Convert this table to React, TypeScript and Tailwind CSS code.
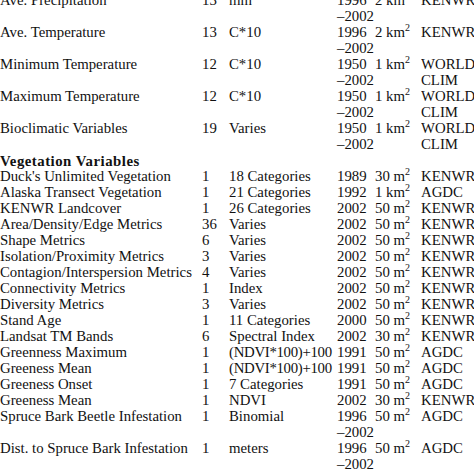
import React from 'react';

type Row = {
  name: string;
  n?: string;
  units?: string;
  years?: string[];
  res?: React.ReactNode;
  source?: string[];
  bold?: boolean;
};

const Sq = () => <span className="relative -top-[6px] text-[10px] leading-none">2</span>;

const km = (v: string) => (
  <>
    {v} km<Sq />
  </>
);
const m = (v: string) => (
  <>
    {v} m<Sq />
  </>
);

const rows: Row[] = [
  { name: 'Ave. Precipitation', n: '13', units: 'mm', years: ['1996', '–2002'], res: km('2'), source: ['KENWR'] },
  { name: 'Ave. Temperature', n: '13', units: 'C*10', years: ['1996', '–2002'], res: km('2'), source: ['KENWR'] },
  { name: 'Minimum Temperature', n: '12', units: 'C*10', years: ['1950', '–2002'], res: km('1'), source: ['WORLD-', 'CLIM'] },
  { name: 'Maximum Temperature', n: '12', units: 'C*10', years: ['1950', '–2002'], res: km('1'), source: ['WORLD-', 'CLIM'] },
  { name: 'Bioclimatic Variables', n: '19', units: 'Varies', years: ['1950', '–2002'], res: km('1'), source: ['WORLD-', 'CLIM'] },
  { name: 'Vegetation Variables', bold: true },
  { name: "Duck's Unlimited Vegetation", n: '1', units: '18 Categories', years: ['1989'], res: m('30'), source: ['KENWR'] },
  { name: 'Alaska Transect Vegetation', n: '1', units: '21 Categories', years: ['1992'], res: km('1'), source: ['AGDC'] },
  { name: 'KENWR Landcover', n: '1', units: '26 Categories', years: ['2002'], res: m('50'), source: ['KENWR'] },
  { name: 'Area/Density/Edge Metrics', n: '36', units: 'Varies', years: ['2002'], res: m('50'), source: ['KENWR'] },
  { name: 'Shape Metrics', n: '6', units: 'Varies', years: ['2002'], res: m('50'), source: ['KENWR'] },
  { name: 'Isolation/Proximity Metrics', n: '3', units: 'Varies', years: ['2002'], res: m('50'), source: ['KENWR'] },
  { name: 'Contagion/Interspersion Metrics', n: '4', units: 'Varies', years: ['2002'], res: m('50'), source: ['KENWR'] },
  { name: 'Connectivity Metrics', n: '1', units: 'Index', years: ['2002'], res: m('50'), source: ['KENWR'] },
  { name: 'Diversity Metrics', n: '3', units: 'Varies', years: ['2002'], res: m('50'), source: ['KENWR'] },
  { name: 'Stand Age', n: '1', units: '11 Categories', years: ['2000'], res: m('50'), source: ['KENWR'] },
  { name: 'Landsat TM Bands', n: '6', units: 'Spectral Index', years: ['2002'], res: m('30'), source: ['KENWR'] },
  { name: 'Greenness Maximum', n: '1', units: '(NDVI*100)+100', years: ['1991'], res: m('50'), source: ['AGDC'] },
  { name: 'Greeness Mean', n: '1', units: '(NDVI*100)+100', years: ['1991'], res: m('50'), source: ['AGDC'] },
  { name: 'Greeness Onset', n: '1', units: '7 Categories', years: ['1991'], res: m('50'), source: ['AGDC'] },
  { name: 'Greeness Mean', n: '1', units: 'NDVI', years: ['2002'], res: m('30'), source: ['KENWR'] },
  { name: 'Spruce Bark Beetle Infestation', n: '1', units: 'Binomial', years: ['1996', '–2002'], res: m('50'), source: ['AGDC'] },
  { name: 'Dist. to Spruce Bark Infestation', n: '1', units: 'meters', years: ['1996', '–2002'], res: m('50'), source: ['AGDC'] },
];

export default function App() {
  return (
    <div className="w-[474px] h-[474px] overflow-hidden bg-white">
      <div
        className="-mt-[8px] grid grid-cols-[202px_27px_109px_37px_46px_53px] text-[14.8px] leading-4 text-[#111] whitespace-nowrap"
        style={{ fontFamily: '"Liberation Serif", "Times New Roman", serif' }}
      >
        {rows.map((r, i) =>
          r.bold ? (
            <div key={i} className="col-span-6 h-4 font-bold pt-[1px] tracking-[0.5px]">
              {r.name}
            </div>
          ) : (
            <React.Fragment key={i}>
              <div>{r.name}</div>
              <div>{r.n}</div>
              <div className={r.units?.startsWith('(') ? 'tracking-[-0.3px]' : ''}>{r.units}</div>
              <div className="-ml-[1px]">
                {r.years?.map((y, j) => (
                  <div key={j}>{y}</div>
                ))}
              </div>
              <div>{r.res}</div>
              <div className="overflow-hidden">
                {r.source?.map((s, j) => (
                  <div key={j}>{s}</div>
                ))}
              </div>
            </React.Fragment>
          )
        )}
      </div>
    </div>
  );
}
